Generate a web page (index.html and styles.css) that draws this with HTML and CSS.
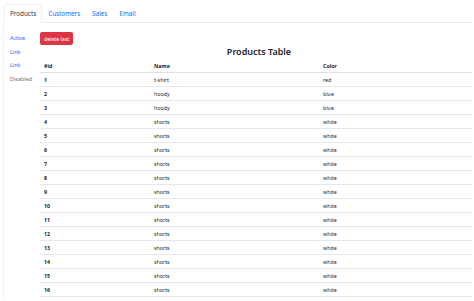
FILE: index.html
```html
<!DOCTYPE html>
<html>
<head>
    <title>Products</title>
    <link rel="stylesheet" href="styles.css">
</head>
<body>
    <ul class="tabs">
        <li class="tab active">Products</li>
        <li class="tab">Customers</li>
        <li class="tab">Sales</li>
        <li class="tab">Email</li>
    </ul>
    <div class="panel">
        <nav class="side-nav">
            <a class="nav-link">Active</a>
            <a class="nav-link">Link</a>
            <a class="nav-link">Link</a>
            <a class="nav-link disabled">Disabled</a>
        </nav>
        <div class="main">
            <button class="btn-danger">delete last</button>
            <h2>Products Table</h2>
            <table class="table">
                <colgroup>
                    <col class="col-id">
                    <col class="col-name">
                    <col>
                </colgroup>
                <thead>
                    <tr><th>#id</th><th>Name</th><th>Color</th></tr>
                </thead>
                <tbody>
                    <tr><th>1</th><td>t-shirt</td><td>red</td></tr>
                    <tr><th>2</th><td>hoody</td><td>blue</td></tr>
                    <tr><th>3</th><td>hoody</td><td>blue</td></tr>
                    <tr><th>4</th><td>shorts</td><td>white</td></tr>
                    <tr><th>5</th><td>shorts</td><td>white</td></tr>
                    <tr><th>6</th><td>shorts</td><td>white</td></tr>
                    <tr><th>7</th><td>shorts</td><td>white</td></tr>
                    <tr><th>8</th><td>shorts</td><td>white</td></tr>
                    <tr><th>9</th><td>shorts</td><td>white</td></tr>
                    <tr><th>10</th><td>shorts</td><td>white</td></tr>
                    <tr><th>11</th><td>shorts</td><td>white</td></tr>
                    <tr><th>12</th><td>shorts</td><td>white</td></tr>
                    <tr><th>13</th><td>shorts</td><td>white</td></tr>
                    <tr><th>14</th><td>shorts</td><td>white</td></tr>
                    <tr><th>15</th><td>shorts</td><td>white</td></tr>
                    <tr><th>16</th><td>shorts</td><td>white</td></tr>
                </tbody>
            </table>
        </div>
    </div>
</body>
</html>
```

FILE: styles.css
```css
body {
    font-family: 'Noto Sans', 'Open Sans', sans-serif;
    color: #212529;
    background-color: white;
    margin: 0;
    padding: 4px 2px 0 3px;
}
.tabs {
    display: flex;
    list-style: none;
    margin: 0;
    padding: 0 0 0 1px;
    border-bottom: 1px solid #e9ecef;
}
.tab {
    font-size: 6.3px;
    line-height: 10px;
    padding: 4px 5px 3px;
    margin-bottom: -1px;
    color: #0d6efd;
    border: 1px solid transparent;
    border-top-left-radius: 3px;
    border-top-right-radius: 3px;
}
.tab.active {
    color: #343a40;
    background-color: white;
    border-color: #eef0f2 #eef0f2 white;
}
.panel {
    display: flex;
    border-left: 1px solid #f3f3f3;
    padding-bottom: 3px;
}
.side-nav {
    display: flex;
    flex-direction: column;
    width: 36px;
    padding-top: 8px;
}
.nav-link {
    font-size: 5.4px;
    line-height: 8px;
    padding: 2.85px 6px;
    color: #0d6efd;
}
.nav-link.disabled {
    color: #6c757d;
}
.main {
    flex: 1;
    padding-top: 9px;
}
.btn-danger {
    display: block;
    font-family: inherit;
    font-size: 5.2px;
    color: white;
    background-color: #dc3545;
    border: none;
    border-radius: 2px;
    height: 13px;
    padding: 0 4px;
}
h2 {
    margin: 0;
    font-size: 9px;
    line-height: 14px;
    font-weight: 600;
    text-align: center;
    padding-left: 6px;
}
.table {
    width: 100%;
    border-collapse: collapse;
    font-size: 5.3px;
    table-layout: fixed;
}
.col-id {
    width: 110px;
}
.col-name {
    width: 169px;
}
.table th,
.table td {
    height: 13px;
    padding: 0 4px;
    text-align: left;
    border-bottom: 1px solid #e6e8eb;
}
.table th {
    font-weight: 700;
}
.table td {
    font-weight: 400;
}
.table thead th {
    border-bottom-color: #dfe2e5;
}
```
